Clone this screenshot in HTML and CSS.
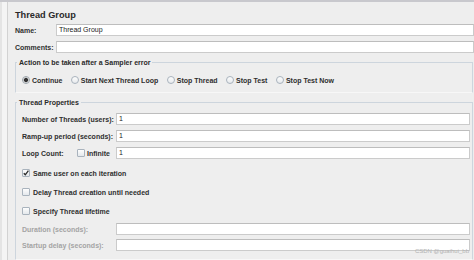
FILE: index.html
```html
<!DOCTYPE html>
<html>
<head>
<meta charset="utf-8">
<link rel="stylesheet" href="styles.css">
</head>
<body>
<div class="topbar"></div>
<div class="app">
  <div class="sidebar"></div>
  <div class="main">
    <div class="title">Thread Group</div>
    <div class="row top-row first">
      <span class="lbl name-lbl">Name:</span>
      <div class="field">Thread Group</div>
    </div>
    <div class="row top-row second">
      <span class="lbl name-lbl">Comments:</span>
      <div class="field"></div>
    </div>

    <fieldset class="box box-action">
      <legend>Action to be taken after a Sampler error</legend>
      <div class="radios">
        <span class="opt"><span class="radio on"></span><span class="lbl">Continue</span></span>
        <span class="opt"><span class="radio"></span><span class="lbl">Start Next Thread Loop</span></span>
        <span class="opt"><span class="radio"></span><span class="lbl">Stop Thread</span></span>
        <span class="opt"><span class="radio"></span><span class="lbl">Stop Test</span></span>
        <span class="opt"><span class="radio"></span><span class="lbl">Stop Test Now</span></span>
      </div>
    </fieldset>

    <fieldset class="box box-props">
      <legend>Thread Properties</legend>
      <div class="row">
        <span class="lbl col-lbl">Number of Threads (users):</span>
        <div class="field">1</div>
      </div>
      <div class="row r-gap">
        <span class="lbl col-lbl">Ramp-up period (seconds):</span>
        <div class="field">1</div>
      </div>
      <div class="row r-gap">
        <span class="lbl col-lbl loop">
          <span class="loop-name">Loop Count:</span>
          <span class="opt"><span class="check"></span><span class="lbl">Infinite</span></span>
        </span>
        <div class="field">1</div>
      </div>
      <div class="row c-row c-first">
        <span class="opt"><span class="check on"><svg viewBox="0 0 8 8" width="8" height="8"><path d="M1.8 4.2 L3.3 5.8 L6.4 1.6" fill="none" stroke="#2a2a2a" stroke-width="1.3"/></svg></span><span class="lbl">Same user on each iteration</span></span>
      </div>
      <div class="row c-row">
        <span class="opt"><span class="check"></span><span class="lbl">Delay Thread creation until needed</span></span>
      </div>
      <div class="row c-row">
        <span class="opt"><span class="check"></span><span class="lbl">Specify Thread lifetime</span></span>
      </div>
      <div class="row d-first">
        <span class="lbl col-lbl dim">Duration (seconds):</span>
        <div class="field"></div>
      </div>
      <div class="row d-second">
        <span class="lbl col-lbl dim">Startup delay (seconds):</span>
        <div class="field"></div>
      </div>
    </fieldset>
  </div>
</div>
<div class="watermark">CSDN @guaihui_bb</div>
</body>
</html>
```

FILE: styles.css
```css
html, body {
  margin: 0;
  padding: 0;
}
body {
  width: 474px;
  height: 260px;
  overflow: hidden;
  background: #eeeeee;
  font-family: "Liberation Sans", Arial, sans-serif;
  color: #2e2e2e;
  position: relative;
}
.topbar {
  height: 2px;
  background: #c8c8cd;
}
.app {
  display: flex;
  height: 258px;
}
.sidebar {
  width: 7px;
  flex: none;
  background: linear-gradient(to right, #e4e4e4 0, #e4e4e4 2px, #f4f4f4 2px);
  border-right: 1px solid #d2d2d2;
}
.main {
  flex: 1;
  padding-left: 7px;
  display: flex;
  flex-direction: column;
  min-width: 0;
}
.title {
  margin-top: 8px;
  height: 11px;
  line-height: 11px;
  font-size: 9.2px;
  font-weight: bold;
  color: #2a2a2a;
}
.row {
  display: flex;
  align-items: center;
  height: 12px;
}
.top-row.first { margin-top: 3px; }
.top-row.second { margin-top: 5px; }
.lbl {
  font-size: 7px;
  font-weight: bold;
  line-height: 9px;
  white-space: nowrap;
}
.name-lbl {
  width: 41px;
  flex: none;
}
.field {
  flex: 1;
  height: 12px;
  box-sizing: border-box;
  background: #ffffff;
  border: 1px solid #cbcbcb;
  border-top-color: #bdbdbd;
  font-size: 7px;
  line-height: 10px;
  padding-left: 2px;
  color: #222;
  white-space: nowrap;
}
.box {
  margin: 0 1px 0 0;
  border: 1px solid #cdd5dd;
  border-bottom-color: #f7f7f7;
  padding: 0 2px 0 6px;
  min-width: 0;
}
.box legend {
  font-size: 7px;
  font-weight: bold;
  line-height: 9px;
  height: 9px;
  padding: 0 2px;
  margin-left: -5px;
  color: #2a2a2a;
}
.box-action {
  margin-top: 5px;
  padding-top: 8px;
  padding-bottom: 7px;
}
.box-props {
  margin-top: 5px;
  padding-top: 6px;
  padding-bottom: 5px;
  flex: 1;
}
.radios {
  display: flex;
  align-items: center;
  height: 10px;
  gap: 8.5px;
}
.opt {
  display: inline-flex;
  align-items: center;
  gap: 2px;
}
.radio {
  width: 8px;
  height: 8px;
  box-sizing: border-box;
  border-radius: 50%;
  border: 1px solid #a9b3bd;
  background: linear-gradient(#fdfdfd, #e6e9ec);
  flex: none;
  position: relative;
}
.radio.on {
  border-color: #9aa3ab;
  background: radial-gradient(circle, #333 0, #333 1.6px, #b8b8b8 2.3px, #f3f3f3 3px);
}
.check {
  width: 8px;
  height: 8px;
  box-sizing: border-box;
  border: 1px solid #a9b3bd;
  border-radius: 1px;
  background: linear-gradient(#fdfdfd, #e4e8ec);
  flex: none;
  display: flex;
}
.check svg {
  margin: -1px;
}
.col-lbl {
  width: 94px;
  flex: none;
}
.loop {
  display: flex;
  align-items: center;
}
.loop-name {
  width: 55px;
  flex: none;
}
.loop .opt {
  gap: 2px;
}
.r-gap { margin-top: 5px; }
.c-row { margin-top: 7px; }
.c-row .opt { gap: 3px; }
.c-first { margin-top: 8px; }
.d-first { margin-top: 6px; }
.d-second { margin-top: 4px; }
.dim {
  color: #a4a4a4;
}
.watermark {
  position: absolute;
  right: 5px;
  bottom: 5px;
  font-size: 6px;
  line-height: 7px;
  color: #b2b2b2;
}
```
